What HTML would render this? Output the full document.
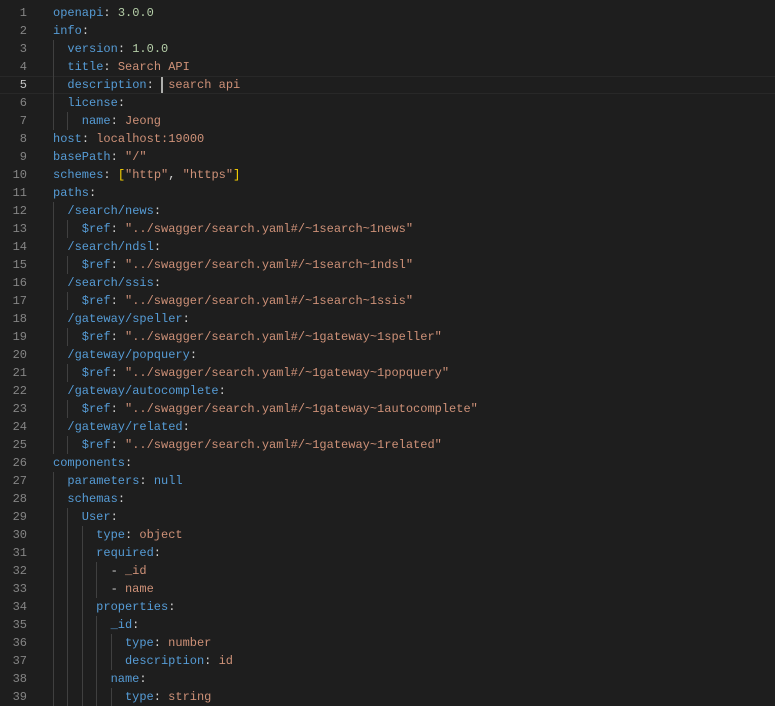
<!DOCTYPE html>
<html><head><meta charset="utf-8"><style>
body{margin:0;background:#1e1e1e;width:775px;height:698px;overflow:hidden;position:relative;font-family:"Liberation Mono",monospace;font-size:12px;}
.l{position:absolute;left:0;width:775px;height:18px;line-height:18px;white-space:pre;}
.n{position:absolute;left:0;width:27px;text-align:right;color:#858585;}
.c{position:absolute;left:53px;color:#d4d4d4;}
.i{display:inline-block;width:14.4px;height:18px;vertical-align:top;box-sizing:border-box;border-left:1px solid #404040;}
.k{color:#569cd6}.s{color:#ce9178}.m{color:#b5cea8}.p{color:#d4d4d4}.b{color:#ffd700}
.cur{position:absolute;left:0;width:775px;height:18px;box-sizing:border-box;border-top:1px solid #282828;border-bottom:1px solid #282828}
.caret{display:inline-block;width:2px;height:16px;background:#aeafad;vertical-align:middle;margin:0 5.2px 0 0}
</style></head><body>
<div class="cur" style="top:76px"></div>
<div class="l" style="top:4px"><span class="n">1</span><span class="c"><span class="k">openapi</span>: <span class="m">3.0.0</span></span></div>
<div class="l" style="top:22px"><span class="n">2</span><span class="c"><span class="k">info</span>:</span></div>
<div class="l" style="top:40px"><span class="n">3</span><span class="c"><span class="i"></span><span class="k">version</span>: <span class="m">1.0.0</span></span></div>
<div class="l" style="top:58px"><span class="n">4</span><span class="c"><span class="i"></span><span class="k">title</span>: <span class="s">Search API</span></span></div>
<div class="l" style="top:76px"><span class="n" style="color:#c6c6c6">5</span><span class="c"><span class="i"></span><span class="k">description</span>: <span class="caret"></span><span class="s">search api</span></span></div>
<div class="l" style="top:94px"><span class="n">6</span><span class="c"><span class="i"></span><span class="k">license</span>:</span></div>
<div class="l" style="top:112px"><span class="n">7</span><span class="c"><span class="i"></span><span class="i"></span><span class="k">name</span>: <span class="s">Jeong</span></span></div>
<div class="l" style="top:130px"><span class="n">8</span><span class="c"><span class="k">host</span>: <span class="s">localhost:19000</span></span></div>
<div class="l" style="top:148px"><span class="n">9</span><span class="c"><span class="k">basePath</span>: <span class="s">"/"</span></span></div>
<div class="l" style="top:166px"><span class="n">10</span><span class="c"><span class="k">schemes</span>: <span class="b">[</span><span class="s">"http"</span>, <span class="s">"https"</span><span class="b">]</span></span></div>
<div class="l" style="top:184px"><span class="n">11</span><span class="c"><span class="k">paths</span>:</span></div>
<div class="l" style="top:202px"><span class="n">12</span><span class="c"><span class="i"></span><span class="k">/search/news</span>:</span></div>
<div class="l" style="top:220px"><span class="n">13</span><span class="c"><span class="i"></span><span class="i"></span><span class="k">$ref</span>: <span class="s">"../swagger/search.yaml#/~1search~1news"</span></span></div>
<div class="l" style="top:238px"><span class="n">14</span><span class="c"><span class="i"></span><span class="k">/search/ndsl</span>:</span></div>
<div class="l" style="top:256px"><span class="n">15</span><span class="c"><span class="i"></span><span class="i"></span><span class="k">$ref</span>: <span class="s">"../swagger/search.yaml#/~1search~1ndsl"</span></span></div>
<div class="l" style="top:274px"><span class="n">16</span><span class="c"><span class="i"></span><span class="k">/search/ssis</span>:</span></div>
<div class="l" style="top:292px"><span class="n">17</span><span class="c"><span class="i"></span><span class="i"></span><span class="k">$ref</span>: <span class="s">"../swagger/search.yaml#/~1search~1ssis"</span></span></div>
<div class="l" style="top:310px"><span class="n">18</span><span class="c"><span class="i"></span><span class="k">/gateway/speller</span>:</span></div>
<div class="l" style="top:328px"><span class="n">19</span><span class="c"><span class="i"></span><span class="i"></span><span class="k">$ref</span>: <span class="s">"../swagger/search.yaml#/~1gateway~1speller"</span></span></div>
<div class="l" style="top:346px"><span class="n">20</span><span class="c"><span class="i"></span><span class="k">/gateway/popquery</span>:</span></div>
<div class="l" style="top:364px"><span class="n">21</span><span class="c"><span class="i"></span><span class="i"></span><span class="k">$ref</span>: <span class="s">"../swagger/search.yaml#/~1gateway~1popquery"</span></span></div>
<div class="l" style="top:382px"><span class="n">22</span><span class="c"><span class="i"></span><span class="k">/gateway/autocomplete</span>:</span></div>
<div class="l" style="top:400px"><span class="n">23</span><span class="c"><span class="i"></span><span class="i"></span><span class="k">$ref</span>: <span class="s">"../swagger/search.yaml#/~1gateway~1autocomplete"</span></span></div>
<div class="l" style="top:418px"><span class="n">24</span><span class="c"><span class="i"></span><span class="k">/gateway/related</span>:</span></div>
<div class="l" style="top:436px"><span class="n">25</span><span class="c"><span class="i"></span><span class="i"></span><span class="k">$ref</span>: <span class="s">"../swagger/search.yaml#/~1gateway~1related"</span></span></div>
<div class="l" style="top:454px"><span class="n">26</span><span class="c"><span class="k">components</span>:</span></div>
<div class="l" style="top:472px"><span class="n">27</span><span class="c"><span class="i"></span><span class="k">parameters</span>: <span class="k">null</span></span></div>
<div class="l" style="top:490px"><span class="n">28</span><span class="c"><span class="i"></span><span class="k">schemas</span>:</span></div>
<div class="l" style="top:508px"><span class="n">29</span><span class="c"><span class="i"></span><span class="i"></span><span class="k">User</span>:</span></div>
<div class="l" style="top:526px"><span class="n">30</span><span class="c"><span class="i"></span><span class="i"></span><span class="i"></span><span class="k">type</span>: <span class="s">object</span></span></div>
<div class="l" style="top:544px"><span class="n">31</span><span class="c"><span class="i"></span><span class="i"></span><span class="i"></span><span class="k">required</span>:</span></div>
<div class="l" style="top:562px"><span class="n">32</span><span class="c"><span class="i"></span><span class="i"></span><span class="i"></span><span class="i"></span>- <span class="s">_id</span></span></div>
<div class="l" style="top:580px"><span class="n">33</span><span class="c"><span class="i"></span><span class="i"></span><span class="i"></span><span class="i"></span>- <span class="s">name</span></span></div>
<div class="l" style="top:598px"><span class="n">34</span><span class="c"><span class="i"></span><span class="i"></span><span class="i"></span><span class="k">properties</span>:</span></div>
<div class="l" style="top:616px"><span class="n">35</span><span class="c"><span class="i"></span><span class="i"></span><span class="i"></span><span class="i"></span><span class="k">_id</span>:</span></div>
<div class="l" style="top:634px"><span class="n">36</span><span class="c"><span class="i"></span><span class="i"></span><span class="i"></span><span class="i"></span><span class="i"></span><span class="k">type</span>: <span class="s">number</span></span></div>
<div class="l" style="top:652px"><span class="n">37</span><span class="c"><span class="i"></span><span class="i"></span><span class="i"></span><span class="i"></span><span class="i"></span><span class="k">description</span>: <span class="s">id</span></span></div>
<div class="l" style="top:670px"><span class="n">38</span><span class="c"><span class="i"></span><span class="i"></span><span class="i"></span><span class="i"></span><span class="k">name</span>:</span></div>
<div class="l" style="top:688px"><span class="n">39</span><span class="c"><span class="i"></span><span class="i"></span><span class="i"></span><span class="i"></span><span class="i"></span><span class="k">type</span>: <span class="s">string</span></span></div>
</body></html>
